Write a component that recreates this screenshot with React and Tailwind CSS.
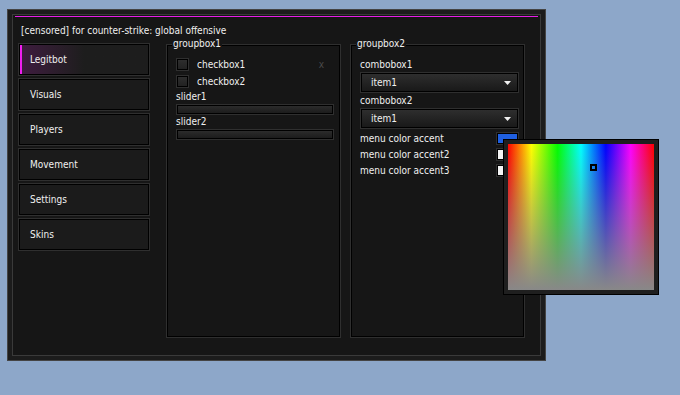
import React from 'react';

const tabs = ['Legitbot', 'Visuals', 'Players', 'Movement', 'Settings', 'Skins'];

// two-tone frame used by every control: grey outside, black inside
const Bevel = ({ className = '', inner = '', children }) => (
  <div className={`border border-[#2f2f2f] ${className}`}>
    <div className={`h-full w-full border border-black ${inner}`}>{children}</div>
  </div>
);

const GroupBox = ({ title, children }) => (
  <Bevel className="relative w-[175px] h-[294px]" inner="pt-[12px] pl-[8px] pr-[6px]">
    <span className="absolute -top-[8px] left-[5px] bg-[#161616] px-[1px] leading-[14px]">{title}</span>
    {children}
  </Bevel>
);

const Checkbox = ({ label, x }) => (
  <div className="flex items-center h-[13px]">
    <Bevel className="w-[13px] h-[13px]" inner="bg-gradient-to-b from-[#2e2e2e] to-[#222]" />
    <span className="ml-[8px] leading-[13px]">{label}</span>
    {x && <span className="ml-auto mr-[9px] text-[#4a4a4a] leading-[13px]">x</span>}
  </div>
);

const Slider = ({ label }) => (
  <div className="flex flex-col">
    <span className="leading-[14px]">{label}</span>
    <Bevel className="w-[158px] h-[11px]" inner="bg-gradient-to-b from-[#2c2c2c] to-[#1c1c1c]" />
  </div>
);

const Combo = ({ label }) => (
  <div className="flex flex-col">
    <span className="leading-[14px]">{label}</span>
    <Bevel className="w-[159px] h-[21px]" inner="bg-gradient-to-b from-[#2e2e2e] to-[#191919] flex items-center pl-[9px] pr-[6px]">
      <span className="leading-[13px]">item1</span>
      <svg className="ml-auto" width="7" height="4" viewBox="0 0 7 4">
        <path d="M0 0H7L3.5 4Z" fill="#f0f0f0" />
      </svg>
    </Bevel>
  </div>
);

const ColorRow = ({ label, color }) => (
  <div className="flex items-center justify-between w-[159px] h-[13px]">
    <span className="leading-[13px]">{label}</span>
    <Bevel className="w-[23px] h-[13px]" inner={color} />
  </div>
);

export default function App() {
  return (
    <div
      className="relative w-[680px] h-[395px] bg-[#8da7c9] pt-[9px] pl-[7px] text-[10px] text-[#f0f0f0]"
      style={{ fontFamily: '"DejaVu Sans Condensed", "Liberation Sans", sans-serif' }}
    >
      <div className="w-[539px] h-[352px] border border-[#444] bg-[#1c1c1c] p-[4px]">
        <div className="h-full border border-[#3a3a3a] bg-[#161616] flex flex-col">
          <div className="mx-[2px] mt-[1px] h-px bg-[#e81ee8]" />
          <div className="pl-[8px] mt-[7px] leading-[13px]">[censored] for counter-strike: global offensive</div>

          <div className="flex pl-[5px] mt-[6px]">
            <div className="flex flex-col gap-[2px] w-[132px]">
              {tabs.map((t, i) => (
                <Bevel
                  key={t}
                  className="h-[33px]"
                  inner={`flex items-center ${i === 0 ? 'bg-gradient-to-r from-[#3f1b40] via-[#1d1d1d] via-50% to-[#1d1d1d]' : 'bg-[#1b1b1b]'}`}
                >
                  {i === 0 && <div className="w-[2px] h-full bg-[#f01ef0]" />}
                  <span className={i === 0 ? 'ml-[8px]' : 'ml-[10px]'}>{t}</span>
                </Bevel>
              ))}
            </div>

            <div className="ml-[16px] mt-[1px]">
              <GroupBox title="groupbox1">
                <div className="flex flex-col gap-[4px]">
                  <Checkbox label="checkbox1" x />
                  <Checkbox label="checkbox2" />
                </div>
                <div className="mt-[2px]">
                  <Slider label="slider1" />
                  <Slider label="slider2" />
                </div>
              </GroupBox>
            </div>

            <div className="ml-[9px] mt-[1px]">
              <GroupBox title="groupbox2">
                <Combo label="combobox1" />
                <div className="mt-[1px]">
                  <Combo label="combobox2" />
                </div>
                <div className="mt-[3px] flex flex-col gap-[3px]">
                  <ColorRow label="menu color accent" color="bg-[#1f5fe0]" />
                  <ColorRow label="menu color accent2" color="bg-[#f4f4f4]" />
                  <ColorRow label="menu color accent3" color="bg-[#f4f4f4]" />
                </div>
              </GroupBox>
            </div>
          </div>
        </div>
      </div>

      {/* colour picker popup, floating over the menu */}
      <div className="absolute left-[503px] top-[139px] w-[156px] h-[156px] border border-black bg-[#1f1f1f] p-[4px]">
        <div className="relative h-full bg-[linear-gradient(to_right,#ff0000_0%,#ffff00_16%,#00ff00_34%,#00ffff_50%,#0000ff_67%,#ff00ff_84%,#ff0000_100%)]">
          <div className="absolute inset-0 bg-gradient-to-b from-transparent to-[#888888]" />
          <div className="absolute left-[82px] top-[20px] w-[7px] h-[7px] border-2 border-black" />
        </div>
      </div>
    </div>
  );
}
